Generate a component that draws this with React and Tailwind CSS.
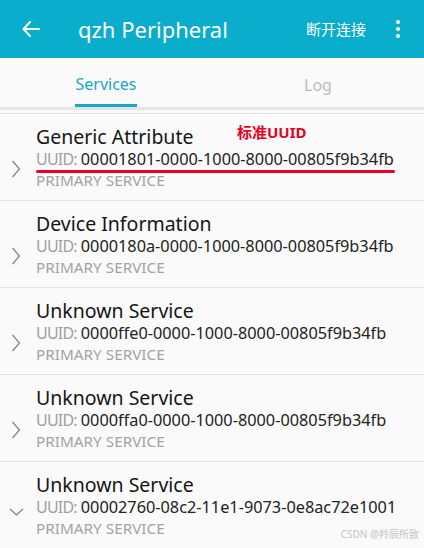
import React from 'react';

const services = [
  { name: 'Generic Attribute', uuid: '00001801-0000-1000-8000-00805f9b34fb' },
  { name: 'Device Information', uuid: '0000180a-0000-1000-8000-00805f9b34fb' },
  { name: 'Unknown Service', uuid: '0000ffe0-0000-1000-8000-00805f9b34fb' },
  { name: 'Unknown Service', uuid: '0000ffa0-0000-1000-8000-00805f9b34fb' },
  { name: 'Unknown Service', uuid: '00002760-08c2-11e1-9073-0e8ac72e1001', open: true },
];

function Chevron({ open }) {
  return open ? (
    <svg width="15" height="8" viewBox="0 0 15 8" fill="none" stroke="#808080" strokeWidth="1.2">
      <path d="M1 1 L7.5 7 L14 1" />
    </svg>
  ) : (
    <svg width="10" height="18" viewBox="0 0 10 18" fill="none" stroke="#808080" strokeWidth="1.2">
      <path d="M1.5 1 L8.5 9 L1.5 17" />
    </svg>
  );
}

function ServiceRow({ service, first }) {
  return (
    <div className="relative flex border-b border-[#e2e2e2] bg-[#fafafa] pt-[12px] pb-[10px]">
      <div className="w-[36px] flex justify-center pt-[34px] pr-[4px]">
        <Chevron open={service.open} />
      </div>
      <div className="flex flex-col">
        <div className="text-[19.5px] leading-[22px] text-[#151515]">{service.name}</div>
        <div className="text-[16.3px] leading-[22px] text-[#222] whitespace-nowrap">
          <span className="text-[#a0a0a0] text-[16px] tracking-[-0.8px] mr-[4px]">UUID:</span>
          {service.uuid}
        </div>
        <div className="text-[15.3px] leading-[20px] text-[#a3a3a3]">PRIMARY SERVICE</div>
      </div>
      {first && (
        <>
          <div className="absolute left-[237px] top-[7px] text-[15px] font-bold text-[#e8001f]">标准UUID</div>
          <div className="absolute left-[36px] top-[56px] w-[359px] h-[3px] rounded-full bg-[#ea0024]" />
        </>
      )}
    </div>
  );
}

export default function App() {
  return (
    <div className="relative w-[424px] h-[548px] overflow-hidden bg-[#fafafa]" style={{ fontFamily: '"Noto Sans", "Noto Sans CJK SC", sans-serif' }}>
      <header className="h-[58px] bg-[#0aadcb] flex items-center text-white">
        <div className="w-[78px] flex items-center pl-[22px]">
          <svg width="18" height="16" viewBox="0 0 18 16" fill="none" stroke="white" strokeWidth="2" strokeLinecap="round">
            <path d="M17 8 H1.5 M8 1 L1.5 8 L8 15" />
          </svg>
        </div>
        <h1 className="text-[22px] flex-1">qzh Peripheral</h1>
        <span className="text-[15px] mr-[30px]">断开连接</span>
        <div className="flex flex-col gap-[3px] mr-[24px]">
          <span className="w-[4px] h-[4px] rounded-full bg-white" />
          <span className="w-[4px] h-[4px] rounded-full bg-white" />
          <span className="w-[4px] h-[4px] rounded-full bg-white" />
        </div>
      </header>
      <nav className="h-[52px] flex bg-[#fafafa] border-b-[3px] border-[#e4e4e4]">
        <div className="flex-1 flex justify-center">
          <div className="flex flex-col items-center justify-end">
            <span className="text-[16px] text-[#1aa7c6] mb-[8px]">Services</span>
            <span className="w-[62px] h-[3px] bg-[#1aa7c6]" />
          </div>
        </div>
        <div className="flex-1 flex justify-center items-end pb-[10px]">
          <span className="text-[16px] text-[#bdbdbd]">Log</span>
        </div>
      </nav>
      <div className="mt-[3px] border-t border-[#e2e2e2]">
        {services.map((s, i) => (
          <ServiceRow key={i} service={s} first={i === 0} />
        ))}
      </div>
      <div className="absolute right-[5px] bottom-[6px] text-[10px] text-[#c4c4c4]">CSDN @羚辰所致</div>
    </div>
  );
}
